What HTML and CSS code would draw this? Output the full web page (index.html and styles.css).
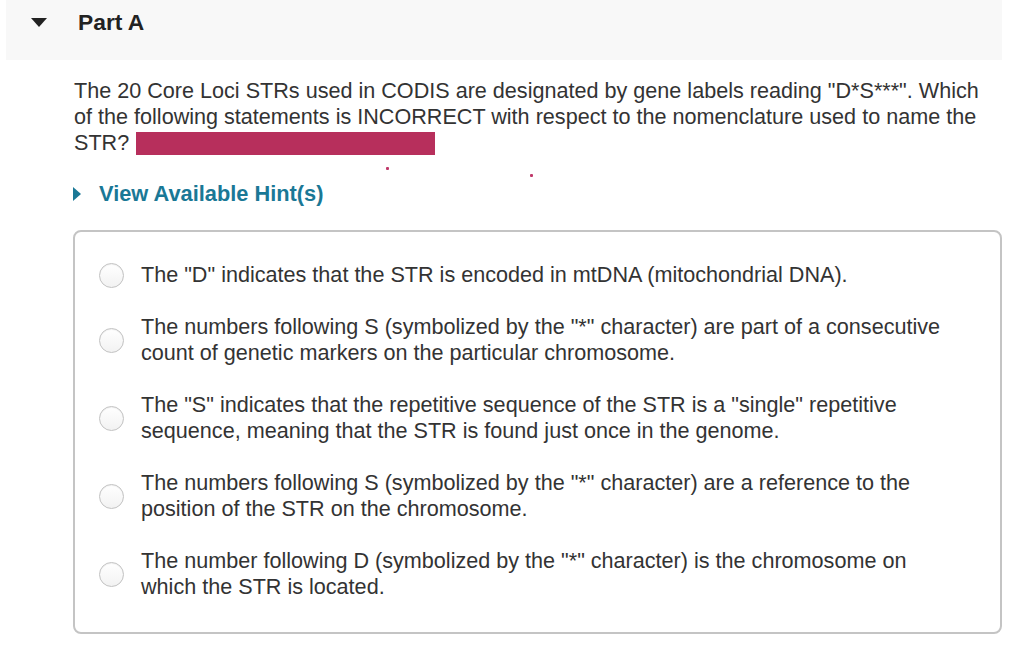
FILE: index.html
```html
<!DOCTYPE html>
<html>
<head>
<meta charset="utf-8">
<link rel="stylesheet" href="styles.css">
</head>
<body>
<div class="page">
  <div class="part-header">
    <span class="caret-down"></span>
    <span class="part-title">Part A</span>
  </div>
  <div class="content">
    <p class="question">The 20 Core Loci STRs used in CODIS are designated by gene labels reading "D*S***". Which of the following statements is INCORRECT with respect to the nomenclature used to name the STR? <span class="redact"></span></p>
    <div class="dots"><span class="dot dot1"></span><span class="dot dot2"></span></div>
    <div class="hint"><span class="caret-right"></span><span class="hint-text">View Available Hint(s)</span></div>
    <div class="answers">
      <label class="option"><span class="radio"></span><span class="opt-text">The "D" indicates that the STR is encoded in mtDNA (mitochondrial DNA).</span></label>
      <label class="option"><span class="radio"></span><span class="opt-text">The numbers following S (symbolized by the "*" character) are part of a consecutive count of genetic markers on the particular chromosome.</span></label>
      <label class="option"><span class="radio"></span><span class="opt-text">The "S" indicates that the repetitive sequence of the STR is a "single" repetitive sequence, meaning that the STR is found just once in the genome.</span></label>
      <label class="option"><span class="radio"></span><span class="opt-text">The numbers following S (symbolized by the "*" character) are a reference to the position of the STR on the chromosome.</span></label>
      <label class="option"><span class="radio"></span><span class="opt-text">The number following D (symbolized by the "*" character) is the chromosome on which the STR is located.</span></label>
    </div>
  </div>
</div>
</body>
</html>
```
FILE: styles.css
```css
* { box-sizing: border-box; }
html, body { margin: 0; padding: 0; background: #fff; }
body {
  font-family: "Liberation Sans", Arial, sans-serif;
  color: #333;
  width: 1024px;
  height: 646px;
  overflow: hidden;
}
.page { padding: 0 22px 0 6px; }
.part-header {
  background: #f8f8f8;
  height: 60px;
  display: flex;
  align-items: center;
  padding-left: 25px;
  padding-bottom: 16px;
}
.caret-down {
  width: 0; height: 0;
  border-left: 8px solid transparent;
  border-right: 8px solid transparent;
  border-top: 9px solid #222;
  margin-right: 31px;
}
.part-title {
  font-weight: bold;
  font-size: 22.8px;
  color: #222;
}
.content { padding-left: 68px; }
.question {
  margin: 18px 0 0 0;
  max-width: 915px;
  font-size: 21.6px;
  line-height: 26px;
  color: #333;
}
.redact {
  display: inline-block;
  width: 299px;
  height: 23px;
  background: #b72f5c;
  vertical-align: -5px;
  margin-left: 1px;
}
.dots { position: relative; height: 25px; }
.dot { position: absolute; width: 3px; height: 3px; background: #c0396a; border-radius: 1px; }
.dot1 { left: 312px; top: 11px; }
.dot2 { left: 456px; top: 18px; }
.hint {
  display: flex;
  align-items: center;
  height: 26px;
}
.caret-right {
  width: 0; height: 0;
  border-top: 7px solid transparent;
  border-bottom: 7px solid transparent;
  border-left: 8px solid #1a7896;
  margin-left: -1px;
  margin-right: 18px;
}
.hint-text {
  color: #1a7896;
  font-weight: bold;
  font-size: 21.8px;
}
.answers {
  margin-top: 23px;
  margin-left: -1px;
  border: 2px solid #c4c4c4;
  border-radius: 8px;
  height: 404px;
  padding: 30px 20px 0 24px;
  display: flex;
  flex-direction: column;
  gap: 26px;
}
.option {
  display: flex;
  align-items: center;
  gap: 17px;
}
.radio {
  flex: none;
  width: 25px;
  height: 25px;
  border-radius: 50%;
  border: 1px solid #c2c2c2;
  background: linear-gradient(#fff, #f2f2f2);
  box-shadow: inset 0 1px 1px rgba(0,0,0,0.06);
}
.opt-text {
  max-width: 812px;
  font-size: 21.6px;
  line-height: 26px;
  color: #333;
}
```
